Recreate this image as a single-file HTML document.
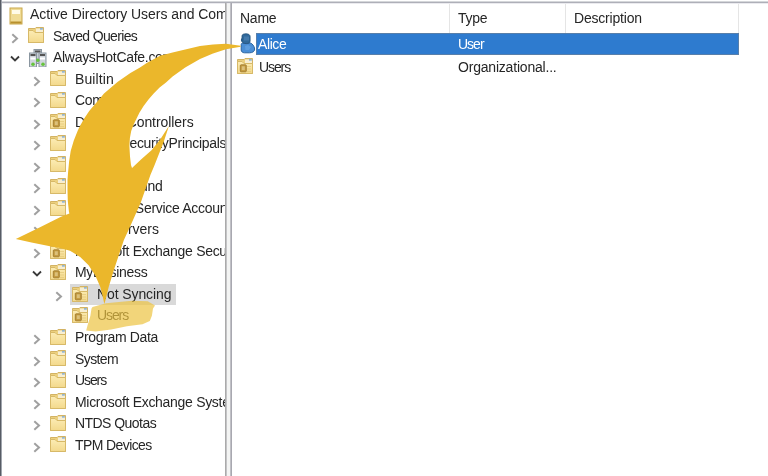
<!DOCTYPE html>
<html><head><meta charset="utf-8">
<style>
html,body{margin:0;padding:0;}
body{width:768px;height:476px;overflow:hidden;position:relative;background:#fff;font-family:"Liberation Sans",sans-serif;font-size:14px;color:#000;}
.abs{position:absolute;}
#lb{left:0;top:0;width:1px;height:476px;background:#575c65;z-index:5;}
#lb2{left:1px;top:0;width:1px;height:476px;background:#a0a5ad;z-index:5;}
#tb{left:0;top:1px;width:768px;height:1px;background:#d5d7da;z-index:4;}
#tb2{left:0;top:2px;width:768px;height:1px;background:#aeafb8;z-index:4;}
#tb3{left:0;top:3px;width:768px;height:1px;background:#ebebef;z-index:4;}
#tree{left:2px;top:3px;width:223px;height:473px;overflow:hidden;background:#fff;}
#tr{left:225px;top:3px;width:2px;height:473px;background:linear-gradient(90deg,#aaaaaa 0,#aaaaaa 1px,#c4c4c6 1px);z-index:6;}
#split{left:227px;top:3px;width:3px;height:473px;background:#f3f4f3;}
#ll{left:230px;top:3px;width:2px;height:473px;background:linear-gradient(90deg,#c0c0c6 0,#c0c0c6 1px,#a8a8b0 1px);z-index:6;}
.row{position:absolute;height:21px;line-height:21px;white-space:nowrap;}
.txt{position:absolute;top:0;white-space:nowrap;letter-spacing:-0.25px;color:#262626;will-change:transform;transform:scaleY(1.05);transform-origin:0 13.35px;}
.ico{position:absolute;}
.chev{position:absolute;}
.hdr{position:absolute;top:3px;height:30px;line-height:30px;}
.sep{position:absolute;top:3px;width:1px;height:30px;background:#e5e5e5;}
</style></head><body>
<svg width="0" height="0" style="position:absolute">
<defs>
<linearGradient id="fg" x1="0" y1="0" x2="0" y2="1"><stop offset="0" stop-color="#fcecb4"/><stop offset="1" stop-color="#f3d98c"/></linearGradient>
<symbol id="folder" viewBox="0 0 16 16">
<path d="M0.5 1.5 H7 L8 0.5 H15.5 V15.5 H0.5 Z" fill="#ecd07e" stroke="#d3b364" stroke-width="1"/>
<path d="M8 1.5 H15 V5 H8 Z" fill="#f7eed2"/>
<path d="M12 1.2 H14.8 V2.6 H12 Z" fill="#7eaad6"/>
<path d="M0.5 3.5 H5 L7 5.5 H15.5 V15.5 H0.5 Z" fill="url(#fg)" stroke="#d7b968" stroke-width="1"/>
</symbol>
<symbol id="ou" viewBox="0 0 16 16">
<use href="#folder"/>
<rect x="3.3" y="6.8" width="6" height="7" rx="0.8" fill="#c39a3e" stroke="#9a7428" stroke-width="0.8"/>
<rect x="4.8" y="8.3" width="3" height="3.8" fill="#dcc07a"/>
<path d="M10 8.5 H14 M10 11 H14 M10 13.5 H14" stroke="#e2c779" stroke-width="0.7"/>
</symbol>
<symbol id="chr" viewBox="0 0 8 11"><path d="M1.3 1.2 L6 5.5 L1.3 9.8" fill="none" stroke="#a0a0a0" stroke-width="2"/></symbol>
<symbol id="chd" viewBox="0 0 10 8"><path d="M1 1.5 L5 5.5 L9 1.5" fill="none" stroke="#3a3a3a" stroke-width="1.8"/></symbol>
<symbol id="aduc" viewBox="0 0 14 18">
<rect x="0.5" y="0.5" width="13" height="17" fill="#c9a74a"/>
<rect x="1.5" y="1.5" width="11" height="15" fill="#f0dc96"/>
<rect x="3" y="3" width="8" height="4" fill="#fffbe8"/>
<rect x="1.5" y="14.5" width="11" height="2" fill="#b8902e"/>
</symbol>
<symbol id="domain" viewBox="0 0 18 18">
<rect x="5" y="0.5" width="7.5" height="14" fill="#c8cfd6" stroke="#8a96a0" stroke-width="1"/>
<rect x="6" y="1.5" width="5.5" height="2" fill="#555"/>
<rect x="0.5" y="4" width="7" height="14" fill="#d0d6dc" stroke="#8a96a0" stroke-width="1"/>
<rect x="10" y="4" width="7" height="14" fill="#d0d6dc" stroke="#8a96a0" stroke-width="1"/>
<rect x="1.5" y="5" width="5" height="2" fill="#555"/>
<rect x="11" y="5" width="5" height="2" fill="#555"/>
<rect x="1.5" y="8.5" width="5" height="2" fill="#fff"/>
<rect x="11" y="8.5" width="5" height="2" fill="#fff"/>
<circle cx="8.8" cy="11.3" r="1.8" fill="#66c43c"/>
<circle cx="4" cy="15.2" r="1.8" fill="#66c43c"/>
<circle cx="14" cy="15.2" r="1.8" fill="#66c43c"/>
</symbol>
<symbol id="user" viewBox="0 0 16 21">
<path d="M1.2 11.5 C1.2 10.5 2 10 3 10 L10.5 10 C12.2 10.6 14.3 13 14.7 16 C14.7 18.5 12.5 19.8 9.5 19.8 L4.5 19.8 C2.5 19.8 1.2 18.5 1.2 17 Z" fill="#4a8ed6" stroke="#2b64a0" stroke-width="1"/>
<path d="M5 13 L8 12 L11 14 L9 17 L5.5 17 Z" fill="#6aa6e4" opacity="0.6"/>
<ellipse cx="1.9" cy="7" rx="1" ry="1.8" fill="#2a5f90"/>
<path d="M2 3 C2 1.5 3.5 0.8 6 0.8 C8.5 0.8 10.1 1.8 10.1 3.5 L10.1 8 C10.1 9.8 8.5 10.6 6.2 10.6 C3.8 10.6 2 9.8 2 8 Z" fill="#30699b" stroke="#24507a" stroke-width="0.8"/>
<rect x="4" y="3.5" width="5" height="4" fill="#4d82b3" opacity="0.7"/>
</symbol>
</defs>
</svg>

<div class="abs" id="tb"></div>
<div class="abs" id="lb"></div>
<div class="abs" id="lb2"></div>
<div class="abs" id="tb2"></div>
<div class="abs" id="tb3"></div>

<div class="abs" id="tree"><div style="position:absolute;left:-2px;top:-3px;width:225px;height:476px">
<svg class="ico" style="left:9px;top:6.750000000000001px" width="14" height="18" viewBox="0 0 14 18"><use href="#aduc"/></svg>
<div class="txt" style="left:30px;top:6.05px;line-height:17px;letter-spacing:-0.05px">Active Directory Users and Computers [SERVER.AlwaysHotCafe.com]</div>
<svg class="chev" style="left:11px;top:32.58px" width="8" height="11"><use href="#chr"/></svg>
<svg class="ico" style="left:27.5px;top:27.279999999999998px" width="16" height="16"><use href="#folder"/></svg>
<div class="txt" style="left:53px;top:27.58px;line-height:17px;letter-spacing:-0.65px">Saved Queries</div>
<svg class="chev" style="left:10px;top:54.61px" width="10" height="8"><use href="#chd"/></svg>
<svg class="ico" style="left:29.3px;top:48.81px" width="18" height="18" viewBox="0 0 18 18"><use href="#domain"/></svg>
<div class="txt" style="left:53px;top:49.11px;line-height:17px;letter-spacing:-0.3px">AlwaysHotCafe.com</div>
<svg class="chev" style="left:33px;top:75.64px" width="8" height="11"><use href="#chr"/></svg>
<svg class="ico" style="left:49.5px;top:70.34px" width="16" height="16"><use href="#folder"/></svg>
<div class="txt" style="left:74.5px;top:70.64px;line-height:17px;letter-spacing:0.1px">Builtin</div>
<svg class="chev" style="left:33px;top:97.17px" width="8" height="11"><use href="#chr"/></svg>
<svg class="ico" style="left:49.5px;top:91.87px" width="16" height="16"><use href="#folder"/></svg>
<div class="txt" style="left:74.5px;top:92.17px;line-height:17px;letter-spacing:-0.3px">Computers</div>
<svg class="chev" style="left:33px;top:118.70px" width="8" height="11"><use href="#chr"/></svg>
<svg class="ico" style="left:49.5px;top:113.4px" width="16" height="16"><use href="#ou"/></svg>
<div class="txt" style="left:74.5px;top:113.70px;line-height:17px;letter-spacing:-0.07px">Domain Controllers</div>
<svg class="chev" style="left:33px;top:140.23px" width="8" height="11"><use href="#chr"/></svg>
<svg class="ico" style="left:49.5px;top:134.93px" width="16" height="16"><use href="#folder"/></svg>
<div class="txt" style="left:74.5px;top:135.23px;line-height:17px;letter-spacing:-0.3px">ForeignSecurityPrincipals</div>
<svg class="chev" style="left:33px;top:161.76px" width="8" height="11"><use href="#chr"/></svg>
<svg class="ico" style="left:49.5px;top:156.46px" width="16" height="16"><use href="#folder"/></svg>
<div class="txt" style="left:74.5px;top:156.76px;line-height:17px;letter-spacing:-0.3px">Keys</div>
<svg class="chev" style="left:33px;top:183.29px" width="8" height="11"><use href="#chr"/></svg>
<svg class="ico" style="left:49.5px;top:177.99px" width="16" height="16"><use href="#folder"/></svg>
<div class="txt" style="left:74.5px;top:178.29px;line-height:17px;letter-spacing:-0.3px">LostAndFound</div>
<svg class="chev" style="left:33px;top:204.82px" width="8" height="11"><use href="#chr"/></svg>
<svg class="ico" style="left:49.5px;top:199.52px" width="16" height="16"><use href="#folder"/></svg>
<div class="txt" style="left:74.5px;top:199.82px;line-height:17px;letter-spacing:-0.3px">Managed Service Accounts</div>
<svg class="chev" style="left:33px;top:226.35px" width="8" height="11"><use href="#chr"/></svg>
<svg class="ico" style="left:49.5px;top:221.05px" width="16" height="16"><use href="#folder"/></svg>
<div class="txt" style="left:74.5px;top:221.35px;line-height:17px;letter-spacing:0.0px">Citrix Servers</div>
<svg class="chev" style="left:33px;top:247.88px" width="8" height="11"><use href="#chr"/></svg>
<svg class="ico" style="left:49.5px;top:242.58px" width="16" height="16"><use href="#ou"/></svg>
<div class="txt" style="left:74.5px;top:242.88px;line-height:17px;letter-spacing:-0.3px">Microsoft Exchange Security Groups</div>
<svg class="chev" style="left:32px;top:269.91px" width="10" height="8"><use href="#chd"/></svg>
<svg class="ico" style="left:49.5px;top:264.11px" width="16" height="16"><use href="#ou"/></svg>
<div class="txt" style="left:74.5px;top:264.41px;line-height:17px;letter-spacing:-0.3px">MyBusiness</div>
<div class="abs" style="left:69.5px;top:283.94px;width:106.5px;height:21px;background:#d9d9d9"></div>
<svg class="chev" style="left:55px;top:290.94px" width="8" height="11"><use href="#chr"/></svg>
<svg class="ico" style="left:71.5px;top:285.64px" width="16" height="16"><use href="#ou"/></svg>
<div class="txt" style="left:96.5px;top:285.94px;line-height:17px;letter-spacing:-0.1px">Not Syncing</div>
<svg class="ico" style="left:71.5px;top:307.17px" width="16" height="16"><use href="#ou"/></svg>
<div class="txt" style="left:96.5px;top:307.47px;line-height:17px;letter-spacing:-1.1px">Users</div>
<svg class="chev" style="left:33px;top:334.00px" width="8" height="11"><use href="#chr"/></svg>
<svg class="ico" style="left:49.5px;top:328.70000000000005px" width="16" height="16"><use href="#folder"/></svg>
<div class="txt" style="left:74.5px;top:329.00px;line-height:17px;letter-spacing:-0.35px">Program Data</div>
<svg class="chev" style="left:33px;top:355.53px" width="8" height="11"><use href="#chr"/></svg>
<svg class="ico" style="left:49.5px;top:350.23px" width="16" height="16"><use href="#folder"/></svg>
<div class="txt" style="left:74.5px;top:350.53px;line-height:17px;letter-spacing:-0.6px">System</div>
<svg class="chev" style="left:33px;top:377.06px" width="8" height="11"><use href="#chr"/></svg>
<svg class="ico" style="left:49.5px;top:371.76px" width="16" height="16"><use href="#folder"/></svg>
<div class="txt" style="left:74.5px;top:372.06px;line-height:17px;letter-spacing:-1.1px">Users</div>
<svg class="chev" style="left:33px;top:398.59px" width="8" height="11"><use href="#chr"/></svg>
<svg class="ico" style="left:49.5px;top:393.29px" width="16" height="16"><use href="#folder"/></svg>
<div class="txt" style="left:74.5px;top:393.59px;line-height:17px;letter-spacing:-0.3px">Microsoft Exchange System Objects</div>
<svg class="chev" style="left:33px;top:420.12px" width="8" height="11"><use href="#chr"/></svg>
<svg class="ico" style="left:49.5px;top:414.82000000000005px" width="16" height="16"><use href="#folder"/></svg>
<div class="txt" style="left:74.5px;top:415.12px;line-height:17px;letter-spacing:-0.55px">NTDS Quotas</div>
<svg class="chev" style="left:33px;top:441.65px" width="8" height="11"><use href="#chr"/></svg>
<svg class="ico" style="left:49.5px;top:436.35px" width="16" height="16"><use href="#folder"/></svg>
<div class="txt" style="left:74.5px;top:436.65px;line-height:17px;letter-spacing:-0.6px">TPM Devices</div>
</div></div>
<div class="abs" id="tr"></div>
<div class="abs" id="split"></div>
<div class="abs" id="ll"></div>


<div class="txt" style="left:239.5px;top:9.5px;line-height:17px;letter-spacing:-0.25px">Name</div>
<div class="txt" style="left:457.7px;top:9.5px;line-height:17px">Type</div>
<div class="txt" style="left:573.5px;top:9.5px;line-height:17px;letter-spacing:-0.2px">Description</div>
<div class="sep" style="left:449px"></div>
<div class="sep" style="left:565px"></div>
<div class="sep" style="left:738px"></div>
<svg class="ico" style="left:239.5px;top:33px" width="16" height="21" viewBox="0 0 16 21"><use href="#user"/></svg>
<div class="abs" style="left:256px;top:33px;width:483px;height:22px;background:#2e7bcf"></div>
<svg class="abs" style="left:256px;top:33px" width="483" height="22"><rect x="0.5" y="0.5" width="482" height="21" fill="none" stroke="#c98a4a" stroke-opacity="0.55" stroke-width="1" stroke-dasharray="1 1"/></svg>
<div class="txt" style="left:258px;top:36px;line-height:17px;color:#fff;letter-spacing:-0.4px">Alice</div>
<div class="txt" style="left:457.7px;top:36px;line-height:17px;color:#fff;letter-spacing:-1.0px">User</div>
<svg class="ico" style="left:237px;top:57.5px" width="16" height="16"><use href="#ou"/></svg>
<div class="txt" style="left:258.5px;top:58.7px;line-height:17px;letter-spacing:-1.1px">Users</div>
<div class="txt" style="left:457.7px;top:58.7px;line-height:17px;letter-spacing:-0.2px">Organizational...</div>

<svg class="abs" style="left:0;top:0;z-index:10" width="768" height="476" viewBox="0 0 768 476">
<path d="M92.5 307.0 L106.0 303.3 L132.0 300.7 L147.7 301.2 L155.0 305.4 L153.0 308.5 L151.9 315.8 L149.8 321.0 L142.5 324.2 L126.9 326.2 L111.2 329.4 L95.6 331.5 L86.2 330.4 L87.3 326.2 L90.4 315.8 L91.5 308.5 Z" fill="rgba(236,195,65,0.7)"/>
<path d="M240.6 45.7 L226.0 43.8 L213.0 44.4 L200.0 46.0 L185.2 49.6 L172.6 52.4 L160.0 55.8 L147.1 62.8 L140.0 67.4 L130.4 72.9 L117.8 81.8 L104.0 93.4 L99.3 99.2 L94.3 105.1 L89.2 111.0 L84.2 118.6 L80.0 126.1 L78.0 130.0 L73.8 140.5 L70.7 151.0 L69.1 161.5 L68.1 172.0 L67.5 180.0 L67.5 190.5 L67.8 201.0 L68.9 211.5 L69.4 213.6 L61.0 216.8 L50.5 222.0 L40.0 227.3 L15.8 238.9 L31.5 242.6 L50.0 246.3 L60.0 248.0 L70.0 250.8 L80.2 256.9 L88.6 265.3 L95.3 275.4 L100.3 287.1 L102.9 297.2 L104.3 304.0 L105.4 300.6 L108.7 287.1 L113.8 270.3 L118.8 255.2 L123.9 240.0 L129.0 229.0 L140.7 202.8 L150.4 175.0 L154.6 164.9 L160.0 151.2 L163.5 142.4 L169.0 125.8 L160.0 139.7 L151.5 150.2 L141.0 159.6 L132.0 168.0 L131.0 164.9 L130.0 156.5 L129.4 146.0 L129.9 138.0 L131.2 131.0 L133.5 125.0 L136.1 119.5 L139.4 112.8 L143.6 106.0 L148.7 99.3 L153.7 93.4 L159.6 87.6 L166.0 82.5 L172.6 76.4 L185.2 67.5 L200.0 59.0 L213.0 53.5 L226.0 49.3 L240.6 46.7 Z" fill="#ebb72b"/>
</svg>

</body></html>
